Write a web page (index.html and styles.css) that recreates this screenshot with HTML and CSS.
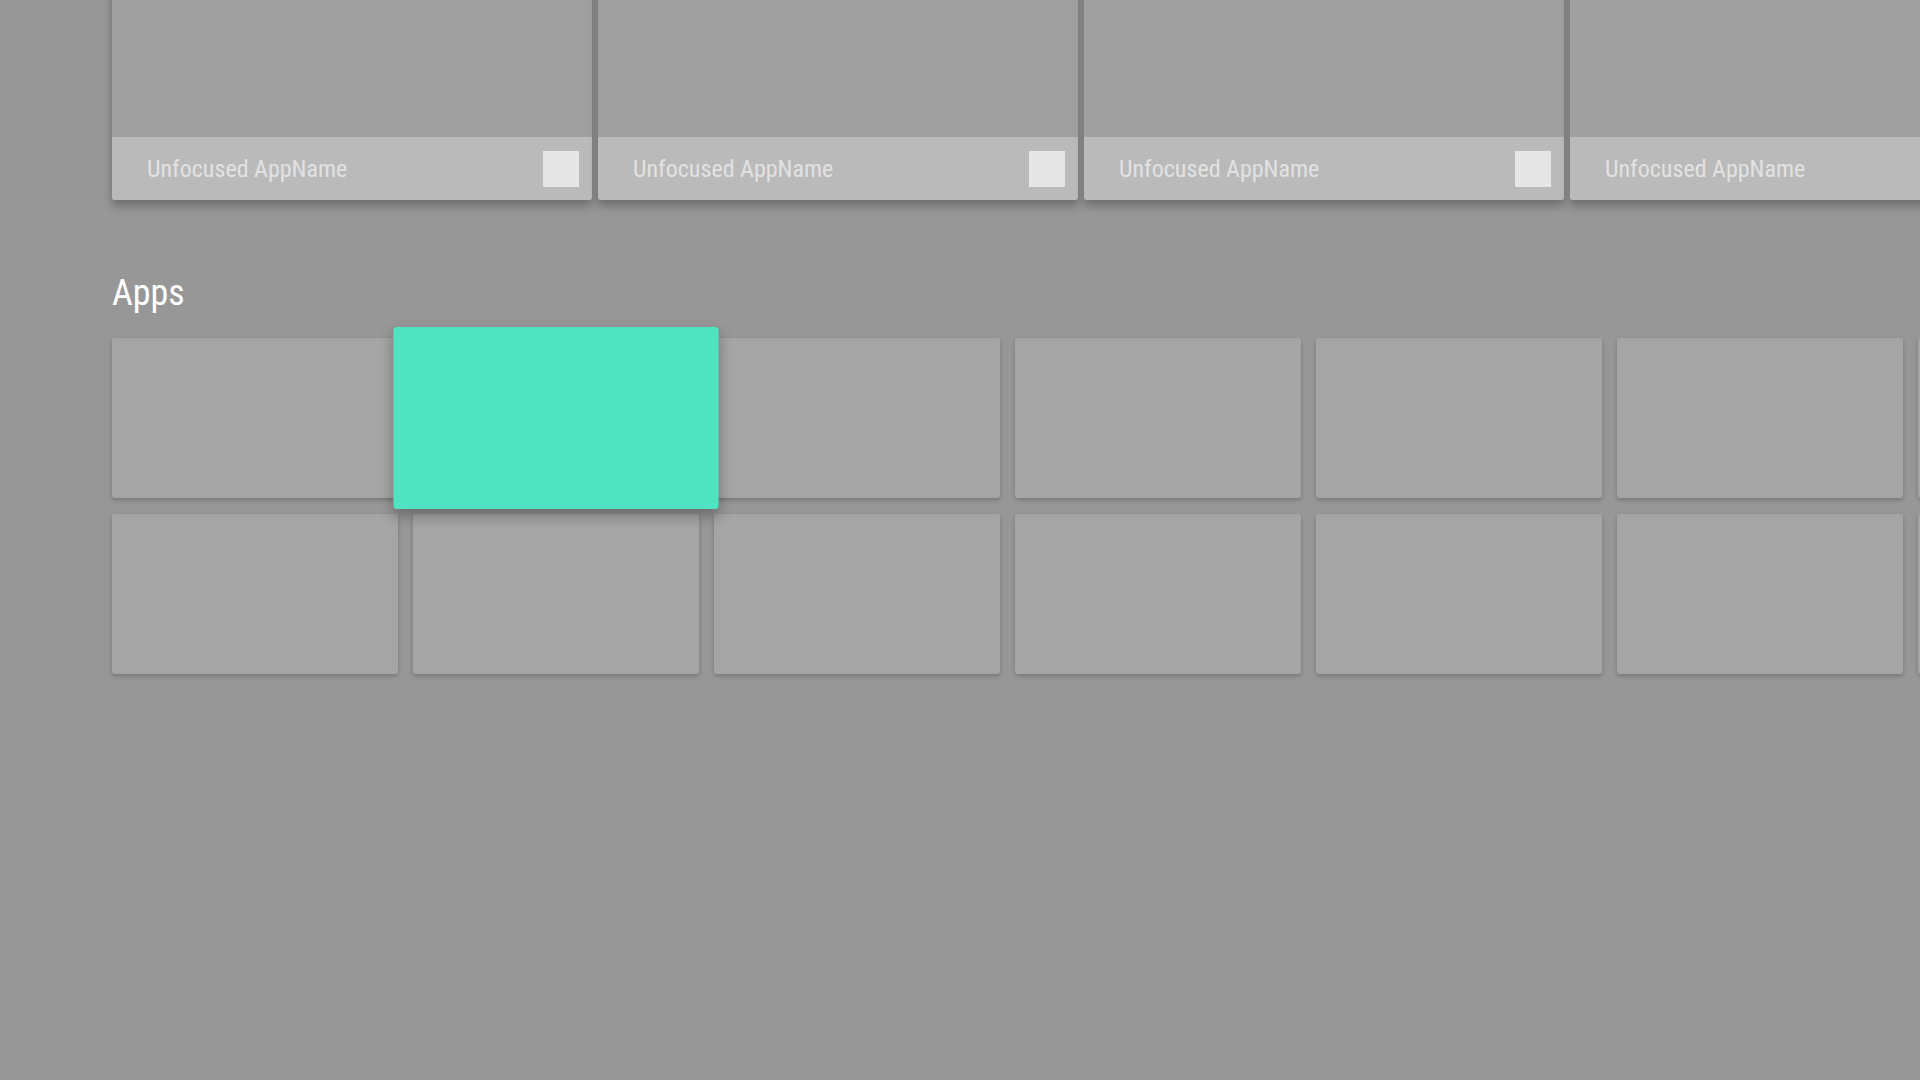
FILE: index.html
```html
<!DOCTYPE html>
<html>
<head>
<meta charset="utf-8">
<link rel="stylesheet" href="styles.css">
</head>
<body>
<div class="screen">
  <div class="row-top">
    <div class="tile">
      <div class="tile-image"></div>
      <div class="tile-caption"><span class="tile-name">Unfocused AppName</span><span class="tile-badge"></span></div>
    </div>
    <div class="tile">
      <div class="tile-image"></div>
      <div class="tile-caption"><span class="tile-name">Unfocused AppName</span><span class="tile-badge"></span></div>
    </div>
    <div class="tile">
      <div class="tile-image"></div>
      <div class="tile-caption"><span class="tile-name">Unfocused AppName</span><span class="tile-badge"></span></div>
    </div>
    <div class="tile">
      <div class="tile-image"></div>
      <div class="tile-caption"><span class="tile-name">Unfocused AppName</span><span class="tile-badge"></span></div>
    </div>
  </div>

  <h2 class="section-title">Apps</h2>

  <div class="app-grid">
    <div class="app"></div>
    <div class="app app-focused"></div>
    <div class="app"></div>
    <div class="app"></div>
    <div class="app"></div>
    <div class="app"></div>
    <div class="app"></div>
    <div class="app"></div>
    <div class="app"></div>
    <div class="app"></div>
    <div class="app"></div>
    <div class="app"></div>
    <div class="app"></div>
    <div class="app"></div>
  </div>
</div>
</body>
</html>
```

FILE: styles.css
```css
html, body {
  margin: 0;
  padding: 0;
  width: 1920px;
  height: 1080px;
  overflow: hidden;
  background: #979797;
}

.screen {
  width: 1920px;
  height: 1080px;
  overflow: hidden;
  padding-left: 112px;
  box-sizing: border-box;
  font-family: "Roboto Condensed", "Liberation Sans Narrow", "DejaVu Sans Condensed", Roboto, sans-serif;
}

.row-top {
  display: flex;
  gap: 6px;
  margin-top: -20px;
}

.tile {
  flex: 0 0 480px;
  width: 480px;
  border-radius: 3px;
  overflow: hidden;
  box-shadow: 0 6px 10px rgba(0, 0, 0, 0.28);
}

.tile-image {
  height: 157px;
  background: #a0a0a0;
}

.tile-caption {
  height: 63px;
  background: #bababa;
  display: flex;
  align-items: center;
  justify-content: space-between;
  padding: 0 13px 0 35px;
}

.tile-name {
  font-size: 24px;
  color: #e2e2e2;
  white-space: nowrap;
}

.tile-badge {
  width: 36px;
  height: 36px;
  background: #e6e6e6;
  flex: 0 0 36px;
}

.section-title {
  margin: 72px 0 0 0;
  font-size: 36px;
  font-weight: 400;
  color: #ffffff;
  line-height: 42px;
  height: 42px;
}

.app-grid {
  margin-top: 24px;
  display: grid;
  grid-template-columns: repeat(7, 286px);
  grid-auto-rows: 160px;
  column-gap: 15px;
  row-gap: 16px;
}

.app {
  background: #a5a5a5;
  border-radius: 3px;
  box-shadow: 0 2px 4px rgba(0, 0, 0, 0.22);
}

.app-focused {
  background: #50e3c2;
  transform: scale(1.137);
  position: relative;
  z-index: 2;
  box-shadow: 0 6px 12px rgba(0, 0, 0, 0.3);
}
```
